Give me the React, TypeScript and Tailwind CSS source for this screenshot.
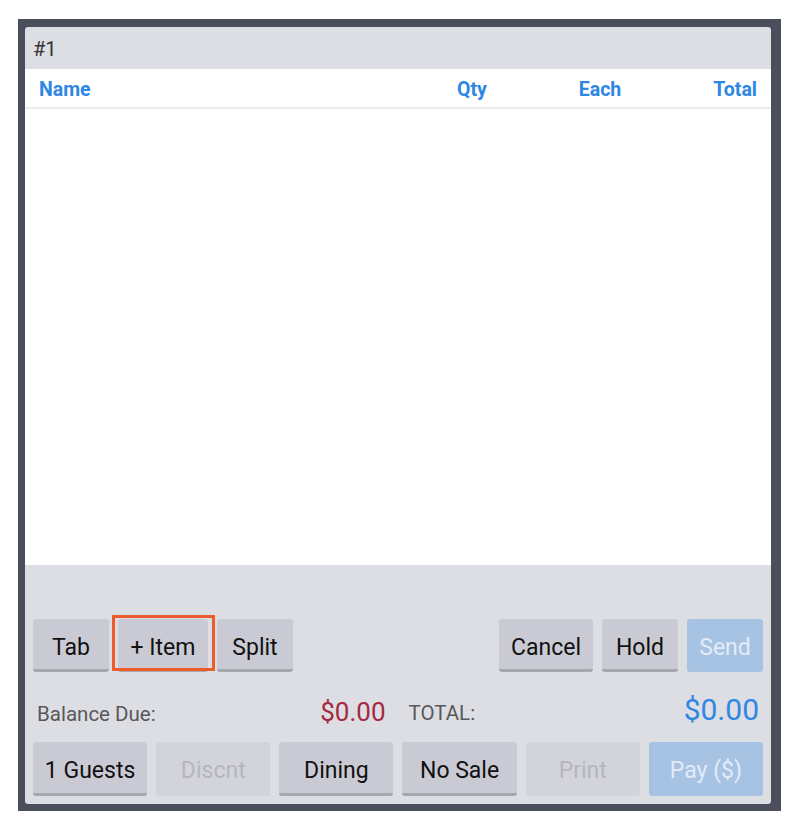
import React from "react";

type Kind = "normal" | "disabled" | "blue";

function Btn({
  label,
  kind = "normal",
  className = "",
  children,
}: {
  label: string;
  kind?: Kind;
  className?: string;
  children?: React.ReactNode;
}) {
  const base =
    "relative flex items-center justify-center rounded-[3px] text-[23px] leading-none";
  const styles: Record<Kind, string> = {
    normal: "bg-[#c9cad3] text-[#111] border-b-[3px] border-[#a6a7af] pt-[6px]",
    disabled: "bg-[#d3d4db] text-[#b5b6bc] pt-[3px]",
    blue: "bg-[#a7c3e4] text-[#e2ebf7] pt-[3px]",
  };
  return (
    <div className={`${base} ${styles[kind]} ${className}`}>
      {label}
      {children}
    </div>
  );
}

export default function App() {
  return (
    <div
      className="w-[798px] h-[830px] bg-white pl-[18px] pt-[19px]"
      style={{ fontFamily: "Roboto, 'Noto Sans', Arial, sans-serif" }}
    >
      <div className="w-[763px] h-[792px] bg-[#4b4f5c] pl-[7px] pr-[10px] pt-[8px] pb-[7px]">
        <div className="h-full flex flex-col bg-[#dddee4] rounded-[3px] overflow-hidden">
          {/* title bar */}
          <div className="h-[42px] shrink-0 flex items-center pl-[8px] pt-[1px] text-[20px] text-[#333]">
            #1
          </div>

          {/* items list */}
          <div className="flex-1 bg-white flex flex-col">
            <div className="h-[40px] shrink-0 flex items-center border-b-2 border-[#ececf2] pl-[14px] pr-[14px] pt-[3px] text-[19.5px] font-bold text-[#2d87e3]">
              <div className="flex-1">Name</div>
              <div className="w-[128px] text-center">Qty</div>
              <div className="w-[128px] text-center">Each</div>
              <div className="w-[93px] text-right">Total</div>
            </div>
          </div>

          {/* bottom controls */}
          <div className="shrink-0 pt-[54px] pb-[8px] px-[8px]">
            <div className="h-[53px] flex justify-between">
              <div className="flex gap-[9px]">
                <Btn label="Tab" className="w-[76px]" />
                <Btn label="+ Item" className="w-[90px]">
                  <div className="absolute left-[-6px] right-[-7px] top-[-4px] bottom-[-2px] border-[3px] border-[#ec5b2a]" />
                </Btn>
                <Btn label="Split" className="w-[76px]" />
              </div>
              <div className="flex gap-[9px]">
                <Btn label="Cancel" className="w-[94px]" />
                <Btn label="Hold" className="w-[76px]" />
                <Btn label="Send" kind="blue" className="w-[76px]" />
              </div>
            </div>

            <div className="h-[70px] grid grid-cols-2 gap-[9px]">
              <div className="flex items-baseline justify-between pl-[4px] pr-[8px] pt-[27px]">
                <span className="text-[20.5px] leading-none text-[#585858]">Balance Due:</span>
                <span className="text-[26px] leading-none text-[#a5293f]">$0.00</span>
              </div>
              <div className="flex items-baseline justify-between pl-[6px] pr-[4px] pt-[23px]">
                <span className="text-[20.5px] leading-none text-[#585858]">TOTAL:</span>
                <span className="text-[30px] leading-none text-[#2f87e2]">$0.00</span>
              </div>
            </div>

            <div className="h-[54px] grid grid-cols-6 gap-[9px]">
              <Btn label="1 Guests" />
              <Btn label="Discnt" kind="disabled" />
              <Btn label="Dining" />
              <Btn label="No Sale" />
              <Btn label="Print" kind="disabled" />
              <Btn label="Pay ($)" kind="blue" />
            </div>
          </div>
        </div>
      </div>
    </div>
  );
}
